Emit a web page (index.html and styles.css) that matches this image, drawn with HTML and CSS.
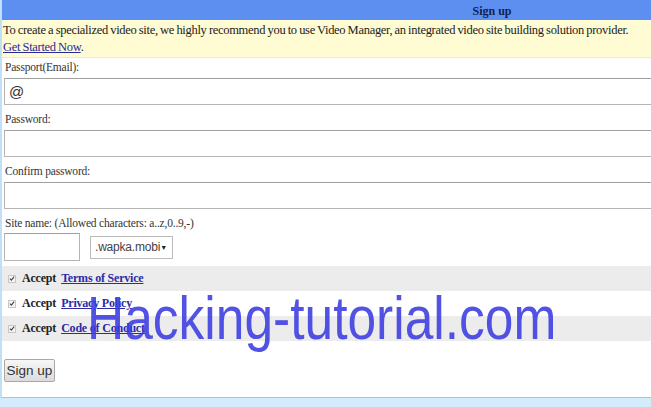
FILE: index.html
```html
<!DOCTYPE html>
<html>
<head>
<meta charset="utf-8">
<link rel="stylesheet" href="styles.css">
</head>
<body>
<div class="page">
  <div class="header">Sign up</div>
  <div class="notice">To create a specialized video site, we highly recommend you to use Video Manager, an integrated video site building solution provider.<br><a href="#">Get Started Now</a>.</div>
  <form class="form">
    <div class="field">
      <div class="label">Passport(Email):</div>
      <div class="input wide">@</div>
    </div>
    <div class="field">
      <div class="label">Password:</div>
      <div class="input wide"></div>
    </div>
    <div class="field">
      <div class="label">Confirm password:</div>
      <div class="input wide"></div>
    </div>
    <div class="field">
      <div class="label">Site name: (Allowed characters: a..z,0..9,-)</div>
      <div class="site-row">
        <div class="input small"></div>
        <div class="select"><span>.wapka.mobi</span><span class="arrow">&#9660;</span></div>
      </div>
    </div>
    <div class="checks">
      <div class="check-row odd"><span class="cb"><svg viewBox="0 0 8 8" width="8" height="8"><path d="M1.2 4.2 L3.2 6.2 L6.8 1.6" fill="none" stroke="#444" stroke-width="1.5"/></svg></span><b>Accept</b> <a href="#">Terms of Service</a></div>
      <div class="check-row"><span class="cb"><svg viewBox="0 0 8 8" width="8" height="8"><path d="M1.2 4.2 L3.2 6.2 L6.8 1.6" fill="none" stroke="#444" stroke-width="1.5"/></svg></span><b>Accept</b> <a href="#">Privacy Policy</a></div>
      <div class="check-row odd"><span class="cb"><svg viewBox="0 0 8 8" width="8" height="8"><path d="M1.2 4.2 L3.2 6.2 L6.8 1.6" fill="none" stroke="#444" stroke-width="1.5"/></svg></span><b>Accept</b> <a href="#">Code of Conduct</a></div>
    </div>
    <div class="actions"><button type="button" class="btn">Sign up</button></div>
  </form>
  <div class="watermark">Hacking-tutorial.com</div>
</div>
</body>
</html>
```
FILE: styles.css
```css
html, body {
  margin: 0;
  padding: 0;
  background: #d3ecfb;
  overflow: hidden;
}
.page {
  position: relative;
  width: 980px;
  height: 397px;
  background: #fff;
  border-left: 2px solid #bfe0f6;
  border-bottom: 1px solid #a3c6de;
  font-family: "Liberation Serif", "Times New Roman", serif;
  color: #222;
}
.header {
  height: 20px;
  line-height: 22px;
  background: #5c8ff0;
  color: #0f1f55;
  font-weight: bold;
  font-size: 12px;
  text-align: center;
}
.notice {
  background: #fffbd3;
  border-bottom: 1px solid #f3ebc0;
  padding: 2px 1px 1px;
  font-size: 12.5px;
  letter-spacing: -0.3px;
  word-spacing: -0.5px;
  line-height: 17px;
  color: #222;
  height: 34px;
}
.notice a {
  color: #2a2a9a;
}
.form {
  padding: 0 2px;
}
.field {
  margin-top: 1px;
}
.field + .field {
  margin-top: 6px;
}
.label {
  font-family: "Liberation Serif", "Times New Roman", serif;
  font-size: 11.5px;
  letter-spacing: -0.2px;
  line-height: 16px;
  color: #333;
  padding-left: 1px;
}
.input {
  box-sizing: border-box;
  height: 27px;
  margin-top: 3px;
  border: 1px solid #b4b4b4;
  border-top-color: #a0a0a0;
  background: #fff;
  font-family: "Liberation Sans", Arial, sans-serif;
  font-size: 15px;
  line-height: 25px;
  padding-left: 4px;
  color: #333;
}
.wide {
  width: 970px;
}
.site-row {
  display: flex;
  align-items: center;
  gap: 10px;
  margin-top: 2px;
}
.small {
  width: 76px;
  height: 28px;
  margin-top: 0;
}
.select {
  box-sizing: border-box;
  width: 83px;
  height: 23px;
  border: 1px solid #bcbcbc;
  font-family: "Liberation Sans", Arial, sans-serif;
  font-size: 12px;
  letter-spacing: -0.2px;
  line-height: 21px;
  color: #444;
  padding: 0 5px 0 4px;
  display: flex;
  align-items: center;
  justify-content: space-between;
  white-space: nowrap;
}
.arrow {
  font-size: 7px;
  color: #222;
}
.checks {
  margin: 5px -2px 0;
}
.check-row {
  height: 25px;
  line-height: 25px;
  font-size: 12px;
  letter-spacing: -0.2px;
  padding-left: 6px;
  display: flex;
  align-items: center;
}
.check-row.odd {
  background: #ececec;
}
.check-row b {
  color: #222;
  margin-right: 5px;
}
.check-row a {
  color: #2b2ba8;
  font-weight: bold;
}
.cb {
  box-sizing: border-box;
  width: 8px;
  height: 8px;
  border: 1px solid #c7c7c7;
  background: #f4f4f4;
  display: inline-flex;
  align-items: center;
  justify-content: center;
  margin-right: 6px;
}
.cb svg {
  width: 7px;
  height: 7px;
}
.actions {
  padding-top: 18px;
}
.btn {
  box-sizing: border-box;
  height: 23px;
  width: 51px;
  padding: 0;
  margin-left: 0;
  font-family: "Liberation Sans", Arial, sans-serif;
  font-size: 13.5px;
  color: #333;
  background: linear-gradient(#f7f7f7, #dcdcdc);
  border: 1px solid #a8a8a8;
  border-radius: 2px;
}
.watermark {
  position: absolute;
  left: 85px;
  top: 287px;
  font-family: "Liberation Sans", Arial, sans-serif;
  font-size: 51.5px;
  line-height: 1;
  color: rgba(58, 58, 225, 0.88);
  transform: scaleY(1.2);
  transform-origin: 0 0;
  white-space: nowrap;
}
```
